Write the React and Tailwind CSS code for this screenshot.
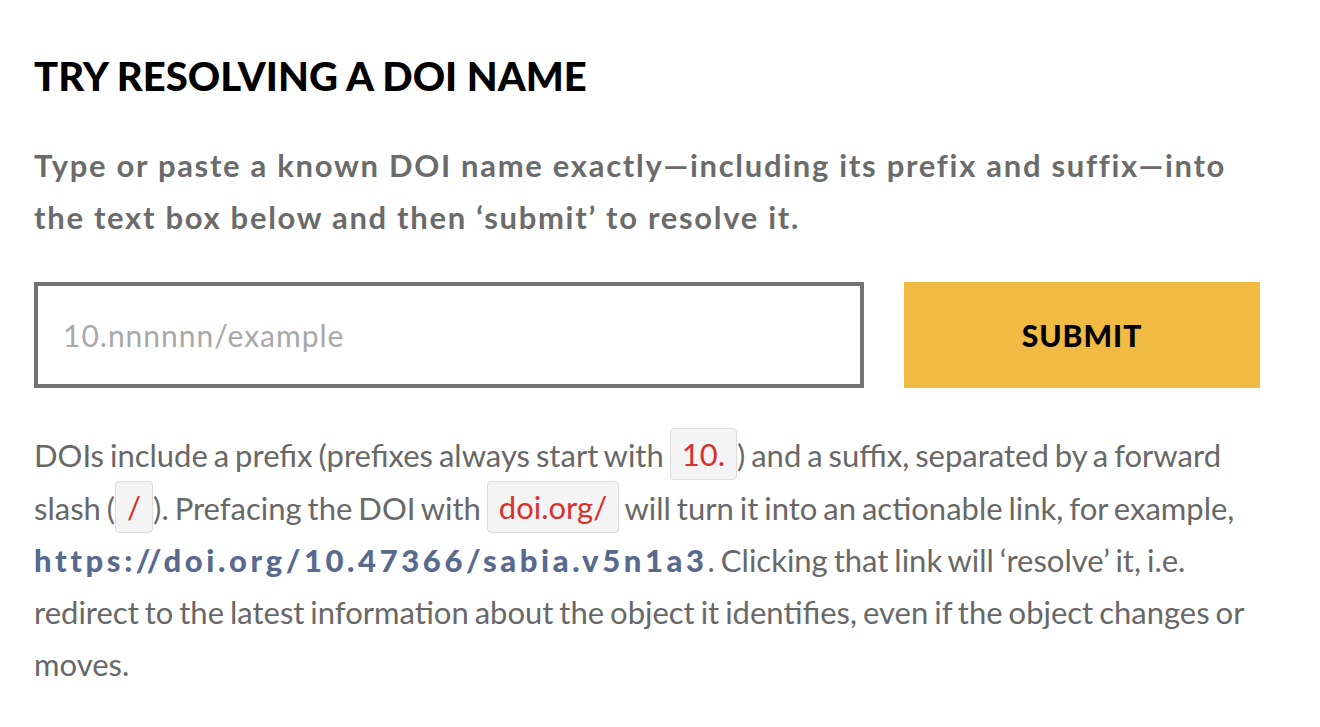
export default function App() {
  const code =
    "inline-block rounded-[4px] border border-[#dcdcdc] bg-[#f4f4f4] px-[11px] font-['Lato',sans-serif] leading-[50px] align-[1px] text-[#d9302c]";
  return (
    <div className="min-h-screen bg-white font-['Lato',sans-serif]">
      <div className="w-[1260px] pl-[34px] pt-[52px]">
        <h2 className="text-[40px] font-black uppercase leading-[48px] text-black">
          Try resolving a DOI name
        </h2>
        <p className="mt-[39px] text-[31px] font-bold leading-[52px] tracking-[1.7px] text-[#6b6b6b]">
          Type or paste a known DOI name exactly—including its prefix and suffix—into the text box below and then ‘submit’ to resolve it.
        </p>
        <form className="mt-[39px] flex gap-[40px]" onSubmit={(e) => e.preventDefault()}>
          <input
            type="text"
            placeholder="10.nnnnnn/example"
            className="h-[106px] w-[830px] border-[4px] border-[#737373] bg-white px-[25px] text-[30px] tracking-[1px] text-[#555] placeholder-[#a8a8a8] outline-none"
          />
          <button
            type="submit"
            className="h-[106px] w-[356px] bg-[#f0ba43] text-[30px] font-black uppercase tracking-[1px] text-black"
          >
            Submit
          </button>
        </form>
        <p className="mt-[40px] text-[31px] leading-[52px] [word-spacing:-2px] text-[#686868]">
          DOIs include a prefix (prefixes always start with <code className={code}>10.</code>) and a suffix, separated by a forward slash (<code className={code}>/</code>). Prefacing the DOI with <code className={code}>doi.org/</code> will turn it into an actionable link, for example,{" "}
          <a href="#" className="font-black tracking-[3.6px] text-[#586a8e]">https://doi.org/10.47366/sabia.v5n1a3</a>. Clicking that link will ‘resolve’ it, i.e. redirect to the latest information about the object it identifies, even if the object changes or moves.
        </p>
      </div>
    </div>
  );
}
